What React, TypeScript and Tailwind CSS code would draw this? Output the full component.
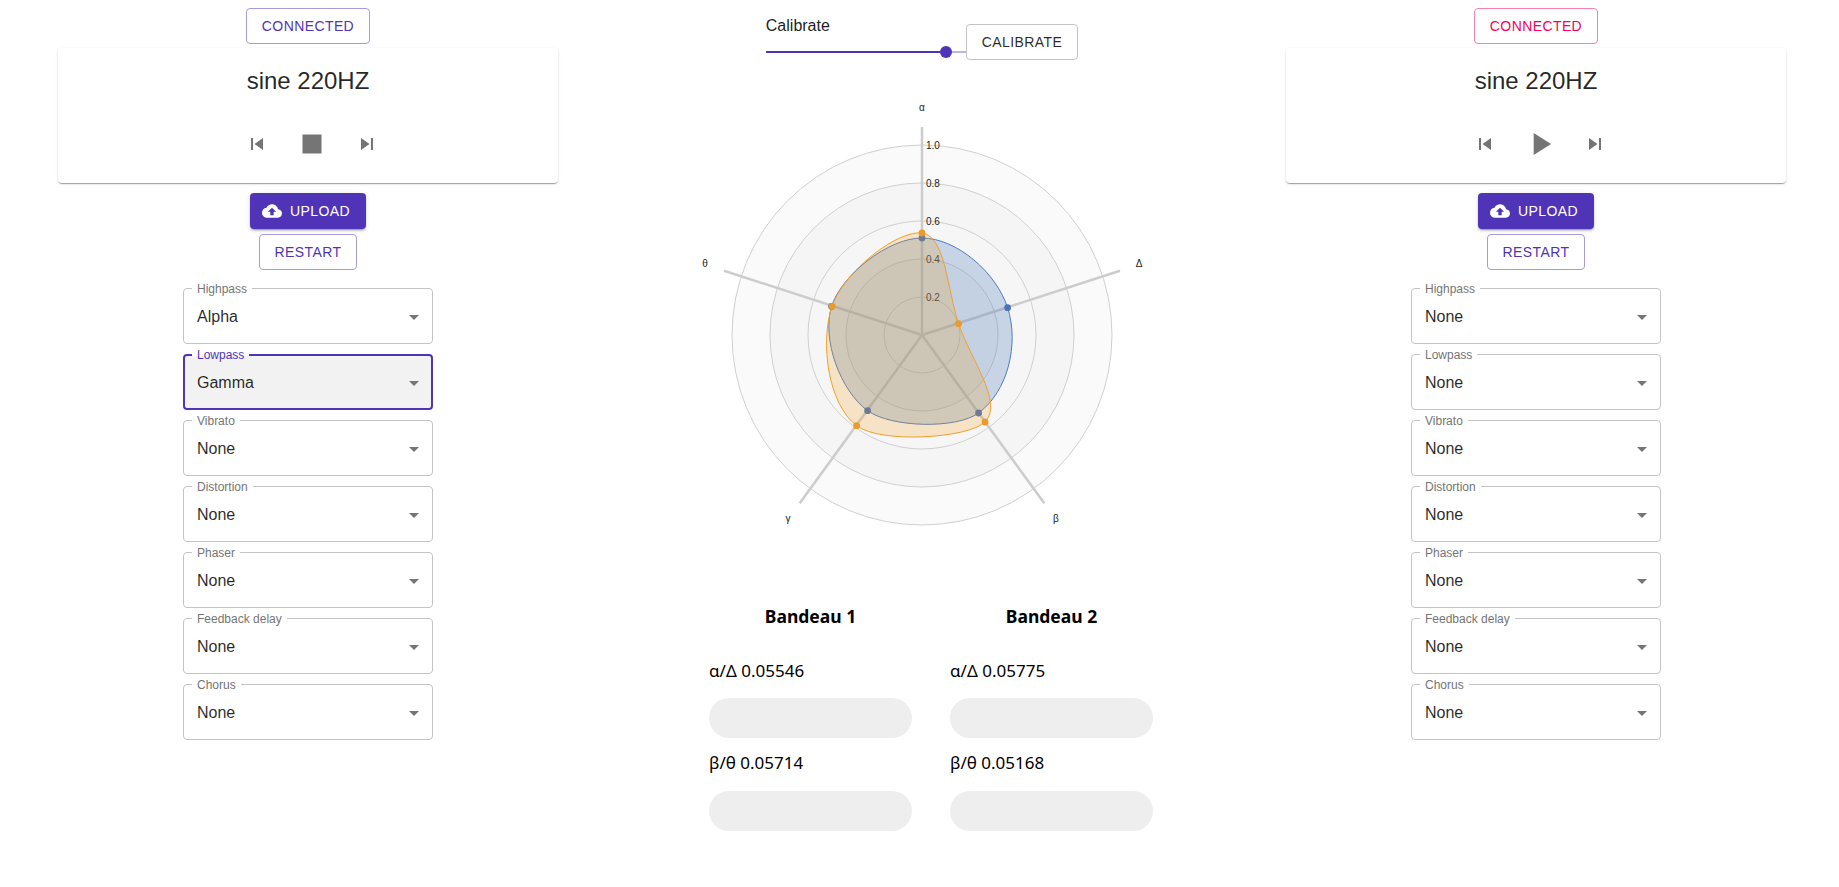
const FILTERS = ["Highpass", "Lowpass", "Vibrato", "Distortion", "Phaser", "Feedback delay", "Chorus"];

type Pt = [number, number];

// chart points, relative to the chart center
const BLUE: Pt[] = [[0, -97], [85.6, -27.3], [56.6, 78], [-54.4, 75.7], [-90.4, -28.6]];
const ORANGE: Pt[] = [[0, -102], [36.6, -11.3], [63, 87], [-65.4, 90.7], [-90, -28.6]];
const SPOKES: Pt[] = [[0, -208], [198, -64.3], [122.3, 168.3], [-122.3, 168.3], [-198, -64.3]];

// curve tension per segment, tuned by eye against the reference
const BLUE_K = [1.2, 1.25, 0.95, 1.12, 1.12];
const ORANGE_K = [1.12, 1.12, 0.95, 1.12, 1.12];

function smoothPath(points: Pt[], ks: number[]) {
  const n = points.length;
  let d = `M${points[0][0]} ${points[0][1]}`;
  for (let i = 0; i < n; i++) {
    const k = ks[i];
    const p0 = points[(i - 1 + n) % n];
    const p1 = points[i];
    const p2 = points[(i + 1) % n];
    const p3 = points[(i + 2) % n];
    const c1x = p1[0] + ((p2[0] - p0[0]) / 6) * k;
    const c1y = p1[1] + ((p2[1] - p0[1]) / 6) * k;
    const c2x = p2[0] - ((p3[0] - p1[0]) / 6) * k;
    const c2y = p2[1] - ((p3[1] - p1[1]) / 6) * k;
    d += `C${c1x} ${c1y} ${c2x} ${c2y} ${p2[0]} ${p2[1]}`;
  }
  return d + "Z";
}

function Icon({ path, size = 24 }: { path: string; size?: number }) {
  return (
    <svg viewBox="0 0 24 24" width={size} height={size} fill="#757575">
      <path d={path} />
    </svg>
  );
}

function FilterSelect({ label, value, focused }: { label: string; value: string; focused?: boolean }) {
  return (
    <div
      className={
        focused
          ? "relative flex h-14 w-[250px] items-center justify-between rounded border-2 border-[#5034b7] bg-[#f2f2f2] pl-[12px] pr-[12px]"
          : "relative flex h-14 w-[250px] items-center justify-between rounded border border-[#c4c4c4] bg-white pl-[13px] pr-[13px]"
      }
    >
      <span
        className={
          focused
            ? "absolute left-[7px] -top-[8px] px-[5px] text-xs leading-[14px] text-[#5034b7]"
            : "absolute left-[8px] -top-[7px] px-[5px] text-xs leading-[14px] text-[#757575]"
        }
      >
        <span className="absolute inset-x-0 top-[6px] h-[2px] bg-white" />
        <span className="relative">{label}</span>
      </span>
      <span className="mt-[2px] text-base text-black/85">{value}</span>
      <svg viewBox="0 0 10 5" width="10" height="5" fill="#757575" className="mt-[2px]">
        <path d="M0 0l5 5 5-5z" />
      </svg>
    </div>
  );
}

function PlayerColumn({
  connectedClass,
  playing,
  highpass,
  lowpass,
  focusLowpass,
}: {
  connectedClass: string;
  playing: boolean;
  highpass: string;
  lowpass: string;
  focusLowpass?: boolean;
}) {
  return (
    <div className="flex flex-col items-center pt-2">
      <button className={`h-9 rounded border px-[15px] text-sm tracking-[0.4px] ${connectedClass}`}>
        CONNECTED
      </button>
      <div className="mt-1 flex h-[135px] w-[500px] flex-col items-center rounded bg-white pt-[17px] shadow-[0_2px_1px_-1px_rgba(0,0,0,0.2),0_1px_1px_0_rgba(0,0,0,0.14),0_1px_3px_0_rgba(0,0,0,0.12)]">
        <p className="h-8 text-2xl leading-8 text-black/85">sine 220HZ</p>
        <div className="mt-[16px] flex items-center pl-2">
          <div className="p-3">
            <Icon path="M6 6h2v12H6zm3.5 6l8.5 6V6z" />
          </div>
          <div className="p-3">
            <Icon size={38} path={playing ? "M8 5v14l11-7z" : "M6 6h12v12H6z"} />
          </div>
          <div className="p-3">
            <Icon path="M6 18l8.5-6L6 6v12zM16 6v12h2V6h-2z" />
          </div>
        </div>
      </div>
      <button className="mt-[10px] flex h-9 items-center gap-2 rounded bg-[#5034b7] pl-3 pr-4 text-sm tracking-[0.4px] text-white shadow-[0_3px_1px_-2px_rgba(0,0,0,0.2),0_2px_2px_0_rgba(0,0,0,0.14),0_1px_5px_0_rgba(0,0,0,0.12)]">
        <svg viewBox="0 0 24 24" width="20" height="20" fill="#ffffff">
          <path d="M19.35 10.04C18.67 6.59 15.64 4 12 4 9.11 4 6.6 5.64 5.35 8.04 2.34 8.36 0 10.91 0 14c0 3.31 2.69 6 6 6h13c2.76 0 5-2.24 5-5 0-2.64-2.05-4.78-4.65-4.96zM14 13v4h-4v-4H7l5-5 5 5h-3z" />
        </svg>
        UPLOAD
      </button>
      <button className="mt-[5px] h-9 rounded border border-[#a89ade] px-[15px] text-sm tracking-[0.4px] text-[#5034b7]">
        RESTART
      </button>
      <div className="mt-[18px] flex flex-col gap-[10px]">
        {FILTERS.map((f) => (
          <FilterSelect
            key={f}
            label={f}
            value={f === "Highpass" ? highpass : f === "Lowpass" ? lowpass : "None"}
            focused={f === "Lowpass" && focusLowpass}
          />
        ))}
      </div>
    </div>
  );
}

function RadarChart() {
  const bands = [
    { r: 190, fill: "#fafafa" },
    { r: 152, fill: "#f5f5f5" },
    { r: 114, fill: "#f6f6f6" },
    { r: 76, fill: "#f3f3f3" },
    { r: 38, fill: "#f1f1f1" },
  ];
  const ticks = ["1.0", "0.8", "0.6", "0.4", "0.2"];
  return (
    <svg viewBox="-230 -250 460 480" width="460" height="480" className="mt-[25px]">
      {bands.map((b) => (
        <circle key={b.r} r={b.r} fill={b.fill} stroke="#d0d0d0" strokeWidth="1" />
      ))}
      {SPOKES.map(([x, y]) => (
        <line key={x} x1="0" y1="0" x2={x} y2={y} stroke="#cccccc" strokeWidth="2.5" />
      ))}
      {ticks.map((t, i) => (
        <text key={t} x="4" y={-190 + i * 38 + 3.5} fontSize="10" fill="#222222">
          {t}
        </text>
      ))}
      <path d={smoothPath(BLUE, BLUE_K)} fill="#5583bc" fillOpacity="0.3" stroke="#4f7cc4" strokeWidth="1" />
      {BLUE.map(([x, y]) => (
        <circle key={x} cx={x} cy={y} r="3.4" fill="#4a72b8" />
      ))}
      <path d={smoothPath(ORANGE, ORANGE_K)} fill="#f59e11" fillOpacity="0.21" stroke="#f0a030" strokeWidth="1" />
      {ORANGE.map(([x, y]) => (
        <circle key={x} cx={x} cy={y} r="3.4" fill="#ec9a2a" />
      ))}
      <g fontSize="10" fill="#222222" textAnchor="middle">
        <text x="0" y="-224">α</text>
        <text x="217" y="-68">Δ</text>
        <text x="134" y="187">β</text>
        <text x="-134" y="187">γ</text>
        <text x="-217" y="-68">θ</text>
      </g>
    </svg>
  );
}

function Band({ title, first, second }: { title: string; first: string; second: string }) {
  return (
    <div className="w-[203px] font-['Noto_Sans',sans-serif]">
      <h3 className="h-7 text-center text-[17.5px] font-bold leading-7 text-black">{title}</h3>
      <p className="mt-[29px] text-[17px] leading-6 text-black">α/Δ {first}</p>
      <div className="mt-[15px] h-10 rounded-full bg-[#eeeeee]" />
      <p className="mt-[13px] text-[17px] leading-6 text-black">β/θ {second}</p>
      <div className="mt-4 h-10 rounded-full bg-[#eeeeee]" />
    </div>
  );
}

export default function App() {
  return (
    <div className="h-screen overflow-hidden bg-white font-['Liberation_Sans',sans-serif]">
      <div className="grid w-[1844px] grid-cols-[616px_612px_616px]">
        <PlayerColumn
          connectedClass="border-[#a89ade] text-[#5034b7]"
          playing={false}
          highpass="Alpha"
          lowpass="Gamma"
          focusLowpass
        />
        <div className="flex flex-col items-center">
          <div className="mt-[13px] flex items-start">
            <div className="w-[200px]">
              <p className="h-6 pt-px text-base leading-6 text-black/90">Calibrate</p>
              <div className="relative mt-[14px] h-[2px] bg-[#bdb3e5]">
                <div className="h-full w-[90%] bg-[#5034b7]" />
                <div className="absolute left-[90%] -top-[5px] -ml-[6px] h-3 w-3 rounded-full bg-[#5034b7]" />
              </div>
            </div>
            <button className="mt-[11px] h-9 rounded border border-[#c4c4c4] px-[15px] text-sm tracking-[0.4px] text-black/85">
              CALIBRATE
            </button>
          </div>
          <RadarChart />
          <div className="ml-[18px] mt-[37px] flex gap-[38px]">
            <Band title="Bandeau 1" first="0.05546" second="0.05714" />
            <Band title="Bandeau 2" first="0.05775" second="0.05168" />
          </div>
        </div>
        <PlayerColumn
          connectedClass="border-[#fa80ab] text-[#f50057]"
          playing
          highpass="None"
          lowpass="None"
        />
      </div>
    </div>
  );
}
